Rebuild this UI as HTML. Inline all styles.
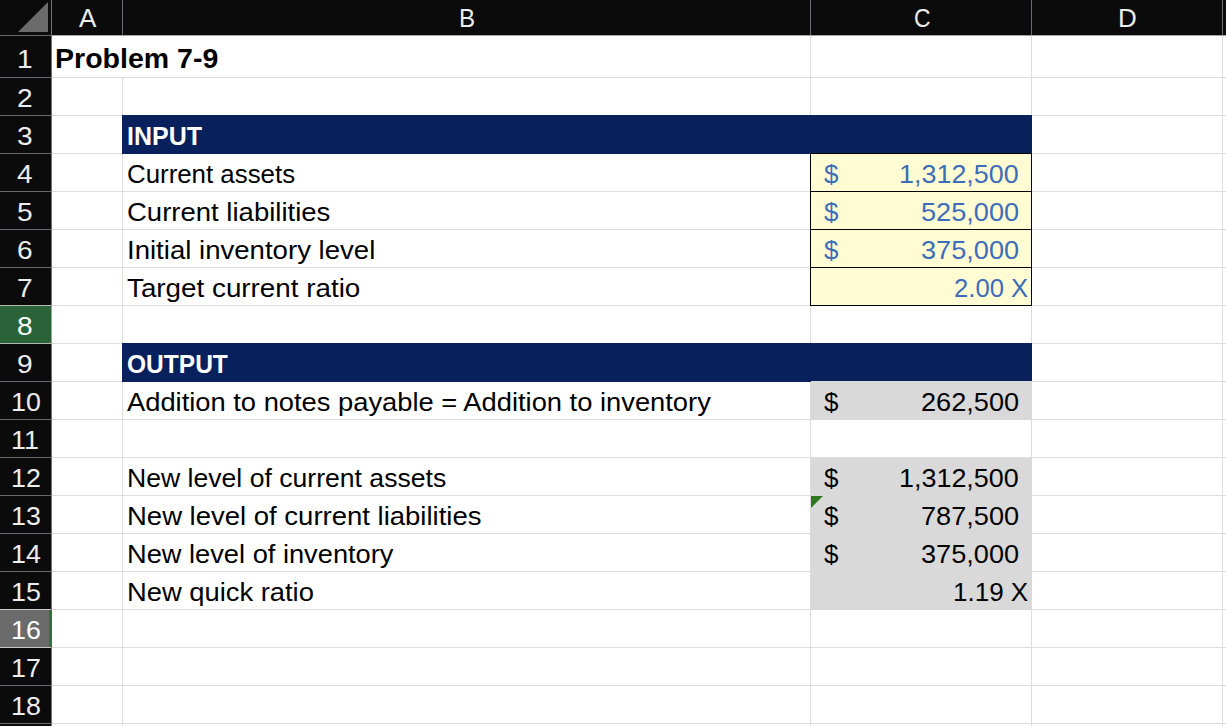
<!DOCTYPE html>
<html><head><meta charset="utf-8"><style>
html,body{margin:0;padding:0;}
body{position:relative;width:1226px;height:726px;overflow:hidden;background:#fff;font-family:"Liberation Sans",sans-serif;}
.a{position:absolute;}
.t{position:absolute;white-space:pre;line-height:30px;height:30px;transform-origin:0 0;}
</style></head><body>
<div class="a" style="left:52px;top:77px;width:1174px;height:1px;background:#dcdcdc;"></div>
<div class="a" style="left:52px;top:115px;width:1174px;height:1px;background:#dcdcdc;"></div>
<div class="a" style="left:52px;top:153px;width:1174px;height:1px;background:#dcdcdc;"></div>
<div class="a" style="left:52px;top:191px;width:1174px;height:1px;background:#dcdcdc;"></div>
<div class="a" style="left:52px;top:229px;width:1174px;height:1px;background:#dcdcdc;"></div>
<div class="a" style="left:52px;top:267px;width:1174px;height:1px;background:#dcdcdc;"></div>
<div class="a" style="left:52px;top:305px;width:1174px;height:1px;background:#dcdcdc;"></div>
<div class="a" style="left:52px;top:343px;width:1174px;height:1px;background:#dcdcdc;"></div>
<div class="a" style="left:52px;top:381px;width:1174px;height:1px;background:#dcdcdc;"></div>
<div class="a" style="left:52px;top:419px;width:1174px;height:1px;background:#dcdcdc;"></div>
<div class="a" style="left:52px;top:457px;width:1174px;height:1px;background:#dcdcdc;"></div>
<div class="a" style="left:52px;top:495px;width:1174px;height:1px;background:#dcdcdc;"></div>
<div class="a" style="left:52px;top:533px;width:1174px;height:1px;background:#dcdcdc;"></div>
<div class="a" style="left:52px;top:571px;width:1174px;height:1px;background:#dcdcdc;"></div>
<div class="a" style="left:52px;top:609px;width:1174px;height:1px;background:#dcdcdc;"></div>
<div class="a" style="left:52px;top:647px;width:1174px;height:1px;background:#dcdcdc;"></div>
<div class="a" style="left:52px;top:685px;width:1174px;height:1px;background:#dcdcdc;"></div>
<div class="a" style="left:52px;top:723px;width:1174px;height:1px;background:#dcdcdc;"></div>
<div class="a" style="left:122px;top:78px;width:1px;height:648px;background:#dcdcdc;"></div>
<div class="a" style="left:810px;top:36px;width:1px;height:690px;background:#dcdcdc;"></div>
<div class="a" style="left:1031px;top:36px;width:1px;height:690px;background:#dcdcdc;"></div>
<div class="a" style="left:1222px;top:36px;width:1px;height:690px;background:#dcdcdc;"></div>
<div class="a" style="left:0px;top:0px;width:1226px;height:35px;background:#0b0b0b;"></div>
<div class="a" style="left:0px;top:35px;width:51px;height:1px;background:#6a6a70;"></div>
<div class="a" style="left:51px;top:35px;width:1175px;height:1px;background:#a4a4a4;"></div>
<div class="a" style="left:0px;top:36px;width:51px;height:690px;background:#0b0b0b;"></div>
<div class="a" style="left:51px;top:0px;width:1px;height:726px;background:#737373;"></div>
<div class="a" style="left:122px;top:0px;width:1px;height:35px;background:#6a6a70;"></div>
<div class="a" style="left:810px;top:0px;width:1px;height:35px;background:#6a6a70;"></div>
<div class="a" style="left:1031px;top:0px;width:1px;height:35px;background:#6a6a70;"></div>
<div class="a" style="left:1222px;top:0px;width:1px;height:35px;background:#6a6a70;"></div>
<div class="a" style="left:0px;top:77px;width:51px;height:1px;background:#6a6a70;"></div>
<div class="a" style="left:0px;top:115px;width:51px;height:1px;background:#6a6a70;"></div>
<div class="a" style="left:0px;top:153px;width:51px;height:1px;background:#6a6a70;"></div>
<div class="a" style="left:0px;top:191px;width:51px;height:1px;background:#6a6a70;"></div>
<div class="a" style="left:0px;top:229px;width:51px;height:1px;background:#6a6a70;"></div>
<div class="a" style="left:0px;top:267px;width:51px;height:1px;background:#6a6a70;"></div>
<div class="a" style="left:0px;top:305px;width:51px;height:1px;background:#6a6a70;"></div>
<div class="a" style="left:0px;top:343px;width:51px;height:1px;background:#6a6a70;"></div>
<div class="a" style="left:0px;top:381px;width:51px;height:1px;background:#6a6a70;"></div>
<div class="a" style="left:0px;top:419px;width:51px;height:1px;background:#6a6a70;"></div>
<div class="a" style="left:0px;top:457px;width:51px;height:1px;background:#6a6a70;"></div>
<div class="a" style="left:0px;top:495px;width:51px;height:1px;background:#6a6a70;"></div>
<div class="a" style="left:0px;top:533px;width:51px;height:1px;background:#6a6a70;"></div>
<div class="a" style="left:0px;top:571px;width:51px;height:1px;background:#6a6a70;"></div>
<div class="a" style="left:0px;top:609px;width:51px;height:1px;background:#6a6a70;"></div>
<div class="a" style="left:0px;top:647px;width:51px;height:1px;background:#6a6a70;"></div>
<div class="a" style="left:0px;top:685px;width:51px;height:1px;background:#6a6a70;"></div>
<div class="a" style="left:0px;top:723px;width:51px;height:1px;background:#6a6a70;"></div>
<div class="a" style="left:0px;top:306px;width:51px;height:37px;background:#2b6339;"></div>
<div class="a" style="left:0px;top:305px;width:51px;height:1px;background:#b0b8b0;"></div>
<div class="a" style="left:0px;top:343px;width:51px;height:1px;background:#b0b8b0;"></div>
<div class="a" style="left:51px;top:305px;width:1px;height:39px;background:#a0a0a0;"></div>
<div class="a" style="left:0px;top:610px;width:51px;height:37px;background:#6b6b6b;"></div>
<div class="a" style="left:0px;top:647px;width:51px;height:1px;background:#c8c8c8;"></div>
<div class="a" style="left:0px;top:609px;width:51px;height:1px;background:#c8c8c8;"></div>
<div class="a" style="left:49px;top:610px;width:3px;height:37px;background:#2e7040;"></div>
<svg class="a" style="left:0;top:0" width="52" height="35"><polygon points="18,32 48,32 48,2" fill="#6b6b6b"/></svg>
<div class="a" style="left:122px;top:115px;width:910px;height:39px;background:#08205c;"></div>
<div class="a" style="left:122px;top:343px;width:910px;height:39px;background:#08205c;"></div>
<div class="a" style="left:810px;top:153px;width:222px;height:39px;background:#fffcd3;box-sizing:border-box;border:1px solid #000;"></div>
<div class="a" style="left:810px;top:191px;width:222px;height:39px;background:#fffcd3;box-sizing:border-box;border:1px solid #000;"></div>
<div class="a" style="left:810px;top:229px;width:222px;height:39px;background:#fffcd3;box-sizing:border-box;border:1px solid #000;"></div>
<div class="a" style="left:810px;top:267px;width:222px;height:39px;background:#fffcd3;box-sizing:border-box;border:1px solid #000;"></div>
<div class="a" style="left:811px;top:381px;width:221px;height:39px;background:#d9d9d9;"></div>
<div class="a" style="left:811px;top:458px;width:221px;height:152px;background:#d9d9d9;"></div>
<svg class="a" style="left:811px;top:496px" width="13" height="13"><polygon points="0,0 12,0 0,12" fill="#30781f"/></svg>
<div class="t" style="left:79.00px;top:3px;color:#ededed;font-size:26px;transform:scaleX(1.0);">A</div>
<div class="t" style="left:459.14px;top:3px;color:#ededed;font-size:26px;transform:scaleX(0.9286);">B</div>
<div class="t" style="left:914.12px;top:3px;color:#ededed;font-size:26px;transform:scaleX(0.8824);">C</div>
<div class="t" style="left:1118.00px;top:3px;color:#ededed;font-size:26px;transform:scaleX(1.0);">D</div>
<div class="t" style="left:16.90px;top:44px;color:#ededed;font-size:26px;transform:scaleX(1.08);">1</div>
<div class="t" style="left:16.90px;top:83px;color:#ededed;font-size:26px;transform:scaleX(1.08);">2</div>
<div class="t" style="left:16.90px;top:121px;color:#ededed;font-size:26px;transform:scaleX(1.08);">3</div>
<div class="t" style="left:16.90px;top:159px;color:#ededed;font-size:26px;transform:scaleX(1.08);">4</div>
<div class="t" style="left:16.90px;top:197px;color:#ededed;font-size:26px;transform:scaleX(1.08);">5</div>
<div class="t" style="left:16.90px;top:235px;color:#ededed;font-size:26px;transform:scaleX(1.08);">6</div>
<div class="t" style="left:16.90px;top:273px;color:#ededed;font-size:26px;transform:scaleX(1.08);">7</div>
<div class="t" style="left:16.90px;top:311px;color:#ffffff;font-size:26px;transform:scaleX(1.08);">8</div>
<div class="t" style="left:16.90px;top:349px;color:#ededed;font-size:26px;transform:scaleX(1.08);">9</div>
<div class="t" style="left:11.20px;top:387px;color:#ededed;font-size:26px;transform:scaleX(1.03);">10</div>
<div class="t" style="left:11.20px;top:425px;color:#ededed;font-size:26px;transform:scaleX(1.03);">11</div>
<div class="t" style="left:11.20px;top:463px;color:#ededed;font-size:26px;transform:scaleX(1.03);">12</div>
<div class="t" style="left:11.20px;top:501px;color:#ededed;font-size:26px;transform:scaleX(1.03);">13</div>
<div class="t" style="left:11.20px;top:539px;color:#ededed;font-size:26px;transform:scaleX(1.03);">14</div>
<div class="t" style="left:11.20px;top:577px;color:#ededed;font-size:26px;transform:scaleX(1.03);">15</div>
<div class="t" style="left:11.20px;top:615px;color:#ffffff;font-size:26px;transform:scaleX(1.03);">16</div>
<div class="t" style="left:11.20px;top:653px;color:#ededed;font-size:26px;transform:scaleX(1.03);">17</div>
<div class="t" style="left:11.20px;top:691px;color:#ededed;font-size:26px;transform:scaleX(1.03);">18</div>
<div class="t" style="left:55.00px;top:44px;color:#000;font-weight:700;font-size:28px;transform:scaleX(1.019);">Problem 7-9</div>
<div class="t" style="left:127.08px;top:121px;color:#fff;font-weight:700;font-size:26px;transform:scaleX(0.9605);">INPUT</div>
<div class="t" style="left:127.06px;top:349px;color:#fff;font-weight:700;font-size:26px;transform:scaleX(0.9434);">OUTPUT</div>
<div class="t" style="left:127.01px;top:159px;color:#000;font-size:26px;transform:scaleX(0.994);">Current assets</div>
<div class="t" style="left:126.94px;top:197px;color:#000;font-size:26px;transform:scaleX(1.0579);">Current liabilities</div>
<div class="t" style="left:126.88px;top:235px;color:#000;font-size:26px;transform:scaleX(1.0606);">Initial inventory level</div>
<div class="t" style="left:127.00px;top:273px;color:#000;font-size:26px;transform:scaleX(1.0691);">Target current ratio</div>
<div class="t" style="left:127.00px;top:387px;color:#000;font-size:26px;transform:scaleX(1.0504);">Addition to notes payable = Addition to inventory</div>
<div class="t" style="left:126.95px;top:463px;color:#000;font-size:26px;transform:scaleX(1.0227);">New level of current assets</div>
<div class="t" style="left:126.89px;top:501px;color:#000;font-size:26px;transform:scaleX(1.0572);">New level of current liabilities</div>
<div class="t" style="left:126.90px;top:539px;color:#000;font-size:26px;transform:scaleX(1.0476);">New level of inventory</div>
<div class="t" style="left:126.90px;top:577px;color:#000;font-size:26px;transform:scaleX(1.0514);">New quick ratio</div>
<div class="t" style="left:824.00px;top:159px;color:#3d6cb8;font-size:26px;transform:scaleX(1.0);">$</div>
<div class="t" style="left:898.93px;top:159px;color:#3d6cb8;font-size:26px;transform:scaleX(1.0354);">1,312,500</div>
<div class="t" style="left:824.00px;top:197px;color:#3d6cb8;font-size:26px;transform:scaleX(1.0);">$</div>
<div class="t" style="left:920.96px;top:197px;color:#3d6cb8;font-size:26px;transform:scaleX(1.0435);">525,000</div>
<div class="t" style="left:824.00px;top:235px;color:#3d6cb8;font-size:26px;transform:scaleX(1.0);">$</div>
<div class="t" style="left:920.96px;top:235px;color:#3d6cb8;font-size:26px;transform:scaleX(1.0435);">375,000</div>
<div class="t" style="left:954.01px;top:273px;color:#3d6cb8;font-size:26px;transform:scaleX(0.9863);">2.00 X</div>
<div class="t" style="left:824.00px;top:387px;color:#000;font-size:26px;transform:scaleX(1.0);">$</div>
<div class="t" style="left:920.96px;top:387px;color:#000;font-size:26px;transform:scaleX(1.0435);">262,500</div>
<div class="t" style="left:824.00px;top:463px;color:#000;font-size:26px;transform:scaleX(1.0);">$</div>
<div class="t" style="left:898.93px;top:463px;color:#000;font-size:26px;transform:scaleX(1.0354);">1,312,500</div>
<div class="t" style="left:824.00px;top:501px;color:#000;font-size:26px;transform:scaleX(1.0);">$</div>
<div class="t" style="left:920.96px;top:501px;color:#000;font-size:26px;transform:scaleX(1.0435);">787,500</div>
<div class="t" style="left:824.00px;top:539px;color:#000;font-size:26px;transform:scaleX(1.0);">$</div>
<div class="t" style="left:920.96px;top:539px;color:#000;font-size:26px;transform:scaleX(1.0435);">375,000</div>
<div class="t" style="left:953.00px;top:577px;color:#000;font-size:26px;transform:scaleX(1.0);">1.19 X</div>
</body></html>
